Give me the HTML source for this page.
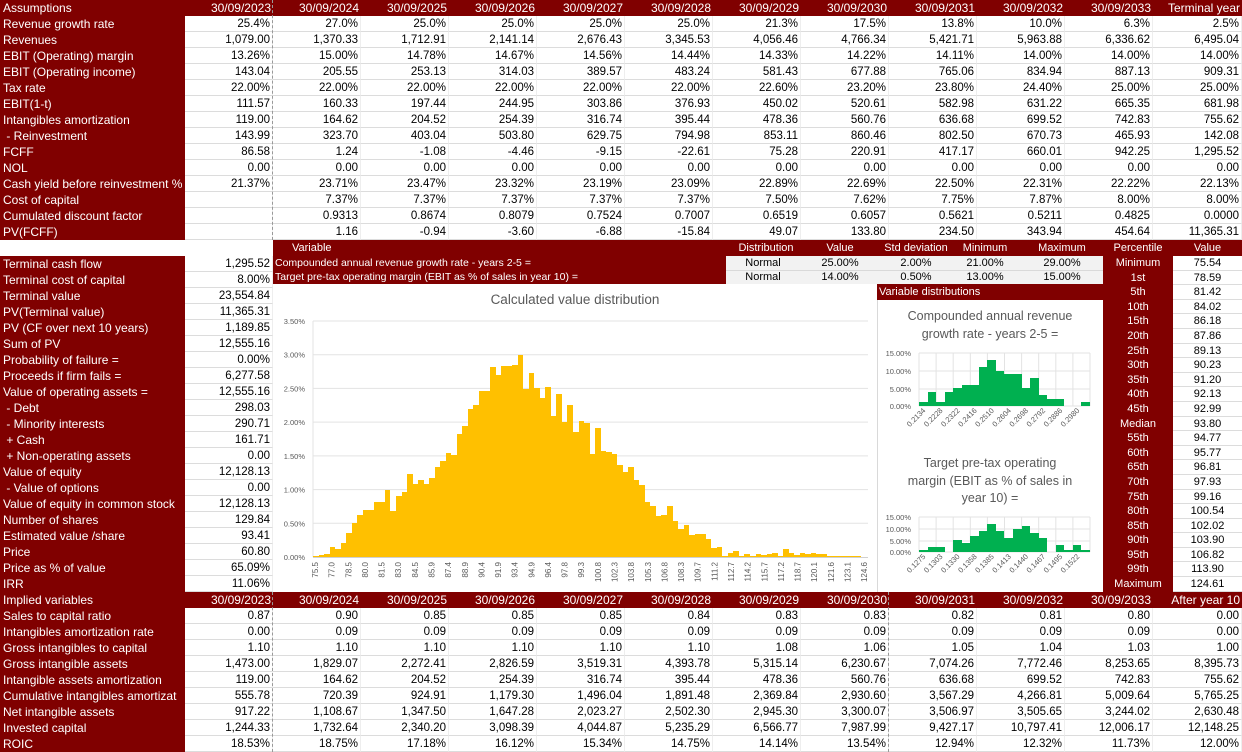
<!DOCTYPE html>
<html><head><meta charset="utf-8">
<style>
*{margin:0;padding:0}
body{width:1242px;height:751px;overflow:hidden;background:#fff;font-family:"Liberation Sans",Arial,sans-serif;position:relative;color:#000}
.blk{position:absolute;left:0}
.r{display:flex;height:16px}
.r>div{box-sizing:border-box;height:16px;line-height:16px;white-space:nowrap;overflow:hidden;text-align:right;padding-right:2px;font-size:11.5px;border-bottom:1px solid #dcdcdc;border-right:1px solid #eeeeee;width:88px;flex:none}
.r>div:last-child{width:89px}
.r>div.l{width:185px;background:#800000;color:#fff;text-align:left;padding-left:3px;font-size:12px;border:none}
.r.h>div{background:#800000;color:#fff;border:none;font-size:12px}
.mid .r>div:last-child{width:88px}
.dash{position:absolute;width:0;border-left:1px dashed #999}
.dk{position:absolute;background:#800000;color:#fff;font-size:11px}
.ab{position:absolute;white-space:nowrap}
.pc{position:absolute;left:1103px;top:256px;width:70px;background:#800000}
.pv{position:absolute;left:1173px;top:256px;width:69px}
.pc div,.pv div{height:14.6px;line-height:14.6px;font-size:11px;text-align:center;box-sizing:border-box}
.pc div{color:#fff}
.pv div{border-bottom:1px solid #dcdcdc}
.bars{position:absolute;display:flex;align-items:flex-end}
.bars i{display:block;flex:none}
.mb i{width:5.545px;background:#ffc000;height:calc(var(--v)*67.4px)}
.g1 i{width:8.55px;background:#00b050;height:calc(var(--v)*3.53px)}
.g2 i{width:8.55px;background:#00b050;height:calc(var(--v)*2.33px)}
</style></head><body>

<!-- TOP TABLE -->
<div class="blk" style="top:0">
<div class="r h"><div class="l">Assumptions</div><div>30/09/2023</div><div>30/09/2024</div><div>30/09/2025</div><div>30/09/2026</div><div>30/09/2027</div><div>30/09/2028</div><div>30/09/2029</div><div>30/09/2030</div><div>30/09/2031</div><div>30/09/2032</div><div>30/09/2033</div><div>Terminal year</div></div>
<div class="r"><div class="l">Revenue growth rate</div><div>25.4%</div><div>27.0%</div><div>25.0%</div><div>25.0%</div><div>25.0%</div><div>25.0%</div><div>21.3%</div><div>17.5%</div><div>13.8%</div><div>10.0%</div><div>6.3%</div><div>2.5%</div></div>
<div class="r"><div class="l">Revenues</div><div>1,079.00</div><div>1,370.33</div><div>1,712.91</div><div>2,141.14</div><div>2,676.43</div><div>3,345.53</div><div>4,056.46</div><div>4,766.34</div><div>5,421.71</div><div>5,963.88</div><div>6,336.62</div><div>6,495.04</div></div>
<div class="r"><div class="l">EBIT (Operating) margin</div><div>13.26%</div><div>15.00%</div><div>14.78%</div><div>14.67%</div><div>14.56%</div><div>14.44%</div><div>14.33%</div><div>14.22%</div><div>14.11%</div><div>14.00%</div><div>14.00%</div><div>14.00%</div></div>
<div class="r"><div class="l">EBIT (Operating income)</div><div>143.04</div><div>205.55</div><div>253.13</div><div>314.03</div><div>389.57</div><div>483.24</div><div>581.43</div><div>677.88</div><div>765.06</div><div>834.94</div><div>887.13</div><div>909.31</div></div>
<div class="r"><div class="l">Tax rate</div><div>22.00%</div><div>22.00%</div><div>22.00%</div><div>22.00%</div><div>22.00%</div><div>22.00%</div><div>22.60%</div><div>23.20%</div><div>23.80%</div><div>24.40%</div><div>25.00%</div><div>25.00%</div></div>
<div class="r"><div class="l">EBIT(1-t)</div><div>111.57</div><div>160.33</div><div>197.44</div><div>244.95</div><div>303.86</div><div>376.93</div><div>450.02</div><div>520.61</div><div>582.98</div><div>631.22</div><div>665.35</div><div>681.98</div></div>
<div class="r"><div class="l">Intangibles amortization</div><div>119.00</div><div>164.62</div><div>204.52</div><div>254.39</div><div>316.74</div><div>395.44</div><div>478.36</div><div>560.76</div><div>636.68</div><div>699.52</div><div>742.83</div><div>755.62</div></div>
<div class="r"><div class="l">&nbsp;- Reinvestment</div><div>143.99</div><div>323.70</div><div>403.04</div><div>503.80</div><div>629.75</div><div>794.98</div><div>853.11</div><div>860.46</div><div>802.50</div><div>670.73</div><div>465.93</div><div>142.08</div></div>
<div class="r"><div class="l">FCFF</div><div>86.58</div><div>1.24</div><div>-1.08</div><div>-4.46</div><div>-9.15</div><div>-22.61</div><div>75.28</div><div>220.91</div><div>417.17</div><div>660.01</div><div>942.25</div><div>1,295.52</div></div>
<div class="r"><div class="l">NOL</div><div>0.00</div><div>0.00</div><div>0.00</div><div>0.00</div><div>0.00</div><div>0.00</div><div>0.00</div><div>0.00</div><div>0.00</div><div>0.00</div><div>0.00</div><div>0.00</div></div>
<div class="r"><div class="l">Cash yield before reinvestment %</div><div>21.37%</div><div>23.71%</div><div>23.47%</div><div>23.32%</div><div>23.19%</div><div>23.09%</div><div>22.89%</div><div>22.69%</div><div>22.50%</div><div>22.31%</div><div>22.22%</div><div>22.13%</div></div>
<div class="r"><div class="l">Cost of capital</div><div></div><div>7.37%</div><div>7.37%</div><div>7.37%</div><div>7.37%</div><div>7.37%</div><div>7.50%</div><div>7.62%</div><div>7.75%</div><div>7.87%</div><div>8.00%</div><div>8.00%</div></div>
<div class="r"><div class="l">Cumulated discount factor</div><div></div><div>0.9313</div><div>0.8674</div><div>0.8079</div><div>0.7524</div><div>0.7007</div><div>0.6519</div><div>0.6057</div><div>0.5621</div><div>0.5211</div><div>0.4825</div><div>0.0000</div></div>
<div class="r"><div class="l">PV(FCFF)</div><div></div><div>1.16</div><div>-0.94</div><div>-3.60</div><div>-6.88</div><div>-15.84</div><div>49.07</div><div>133.80</div><div>234.50</div><div>343.94</div><div>454.64</div><div>11,365.31</div></div>
</div>
<div class="dash" style="left:272px;top:0;height:240px"></div>

<!-- MIDDLE HEADER ROW -->
<div class="dk" style="left:273px;top:240px;width:969px;height:16px;line-height:16px;font-size:11px">
<span class="ab" style="left:19px">Variable</span>
<span class="ab" style="left:453px;width:80px;text-align:center">Distribution</span>
<span class="ab" style="left:527px;width:80px;text-align:center">Value</span>
<span class="ab" style="left:598px;width:90px;text-align:center">Std deviation</span>
<span class="ab" style="left:672px;width:80px;text-align:center">Minimum</span>
<span class="ab" style="left:749px;width:80px;text-align:center">Maximum</span>
<span class="ab" style="left:830px;width:70px;text-align:center">Percentile</span>
<span class="ab" style="left:900px;width:69px;text-align:center">Value</span>
</div>

<!-- MIDDLE LEFT -->
<div class="blk mid" style="top:256px">
<div class="r"><div class="l">Terminal cash flow</div><div>1,295.52</div></div>
<div class="r"><div class="l">Terminal cost of capital</div><div>8.00%</div></div>
<div class="r"><div class="l">Terminal value</div><div>23,554.84</div></div>
<div class="r"><div class="l">PV(Terminal value)</div><div>11,365.31</div></div>
<div class="r"><div class="l">PV (CF over next 10 years)</div><div>1,189.85</div></div>
<div class="r"><div class="l">Sum of PV</div><div>12,555.16</div></div>
<div class="r"><div class="l">Probability of failure =</div><div>0.00%</div></div>
<div class="r"><div class="l">Proceeds if firm fails =</div><div>6,277.58</div></div>
<div class="r"><div class="l">Value of operating assets =</div><div>12,555.16</div></div>
<div class="r"><div class="l">&nbsp;- Debt</div><div>298.03</div></div>
<div class="r"><div class="l">&nbsp;- Minority interests</div><div>290.71</div></div>
<div class="r"><div class="l">&nbsp;+ Cash</div><div>161.71</div></div>
<div class="r"><div class="l">&nbsp;+ Non-operating assets</div><div>0.00</div></div>
<div class="r"><div class="l">Value of equity</div><div>12,128.13</div></div>
<div class="r"><div class="l">&nbsp;- Value of options</div><div>0.00</div></div>
<div class="r"><div class="l">Value of equity in common stock</div><div>12,128.13</div></div>
<div class="r"><div class="l">Number of shares</div><div>129.84</div></div>
<div class="r"><div class="l">Estimated value /share</div><div>93.41</div></div>
<div class="r"><div class="l">Price</div><div>60.80</div></div>
<div class="r"><div class="l">Price as % of value</div><div>65.09%</div></div>
<div class="r"><div class="l">IRR</div><div>11.06%</div></div>
</div>

<!-- Variable block -->
<div class="dk" style="left:273px;top:256px;width:453px;height:28px;font-size:10.5px">
<div style="position:absolute;left:2px;top:0;line-height:14px">Compounded annual revenue growth rate - years 2-5 =</div>
<div style="position:absolute;left:2px;top:14px;line-height:14px">Target pre-tax operating margin (EBIT as % of sales in year 10) =</div>
</div>
<div style="position:absolute;left:726px;top:256px;width:377px;height:28px;background:#f2f2f2;font-size:11px">
<div style="position:absolute;top:0;left:0;width:377px;height:14px;line-height:14px;border-bottom:1px solid #d9d9d9">
<span class="ab" style="left:0;width:74px;text-align:center">Normal</span><span class="ab" style="left:74px;width:80px;text-align:center">25.00%</span><span class="ab" style="left:145px;width:90px;text-align:center">2.00%</span><span class="ab" style="left:219px;width:80px;text-align:center">21.00%</span><span class="ab" style="left:296px;width:80px;text-align:center">29.00%</span></div>
<div style="position:absolute;top:14px;left:0;width:377px;height:14px;line-height:14px">
<span class="ab" style="left:0;width:74px;text-align:center">Normal</span><span class="ab" style="left:74px;width:80px;text-align:center">14.00%</span><span class="ab" style="left:145px;width:90px;text-align:center">0.50%</span><span class="ab" style="left:219px;width:80px;text-align:center">13.00%</span><span class="ab" style="left:296px;width:80px;text-align:center">15.00%</span></div>
</div>
<div class="dk" style="left:877px;top:284px;width:226px;height:16px;line-height:16px;font-size:11px;padding-left:2px;box-sizing:border-box">Variable distributions</div>
<div style="position:absolute;left:877px;top:300px;width:226px;height:292px;border-left:1px solid #d9d9d9;box-sizing:border-box"></div>

<!-- Percentiles -->
<div class="pc"><div>Minimum</div><div>1st</div><div>5th</div><div>10th</div><div>15th</div><div>20th</div><div>25th</div><div>30th</div><div>35th</div><div>40th</div><div>45th</div><div>Median</div><div>55th</div><div>60th</div><div>65th</div><div>70th</div><div>75th</div><div>80th</div><div>85th</div><div>90th</div><div>95th</div><div>99th</div><div>Maximum</div></div>
<div class="pv"><div>75.54</div><div>78.59</div><div>81.42</div><div>84.02</div><div>86.18</div><div>87.86</div><div>89.13</div><div>90.23</div><div>91.20</div><div>92.13</div><div>92.99</div><div>93.80</div><div>94.77</div><div>95.77</div><div>96.81</div><div>97.93</div><div>99.16</div><div>100.54</div><div>102.02</div><div>103.90</div><div>106.82</div><div>113.90</div><div>124.61</div></div>

<!-- Charts SVG: grid, labels -->
<svg width="1242" height="751" style="position:absolute;left:0;top:0" font-family="Liberation Sans, Arial, sans-serif">
<g stroke="#e3e3e3" stroke-width="1">
<line x1="313" x2="868" y1="321" y2="321"/><line x1="313" x2="868" y1="354.7" y2="354.7"/><line x1="313" x2="868" y1="388.4" y2="388.4"/><line x1="313" x2="868" y1="422.1" y2="422.1"/><line x1="313" x2="868" y1="455.9" y2="455.9"/><line x1="313" x2="868" y1="489.6" y2="489.6"/><line x1="313" x2="868" y1="523.3" y2="523.3"/>
<line x1="313" x2="313" y1="321" y2="557"/>
</g>
<line x1="313" x2="868" y1="557.5" y2="557.5" stroke="#d0d0d0"/>
<text x="575" y="304" font-size="13.5" fill="#595959" text-anchor="middle">Calculated value distribution</text>
<g font-size="7.5" fill="#595959" text-anchor="end">
<text x="305" y="324">3.50%</text><text x="305" y="357.7">3.00%</text><text x="305" y="391.4">2.50%</text><text x="305" y="425.1">2.00%</text><text x="305" y="458.9">1.50%</text><text x="305" y="492.6">1.00%</text><text x="305" y="526.3">0.50%</text><text x="305" y="560">0.00%</text>
</g>
<g font-size="8" fill="#595959" text-anchor="end">
<text transform="translate(318,562) rotate(-90)">75.5</text><text transform="translate(334.6,562) rotate(-90)">77.0</text><text transform="translate(351.3,562) rotate(-90)">78.5</text><text transform="translate(367.9,562) rotate(-90)">80.0</text><text transform="translate(384.6,562) rotate(-90)">81.5</text><text transform="translate(401.2,562) rotate(-90)">83.0</text><text transform="translate(417.8,562) rotate(-90)">84.5</text><text transform="translate(434.5,562) rotate(-90)">85.9</text><text transform="translate(451.1,562) rotate(-90)">87.4</text><text transform="translate(467.8,562) rotate(-90)">88.9</text><text transform="translate(484.4,562) rotate(-90)">90.4</text><text transform="translate(501,562) rotate(-90)">91.9</text><text transform="translate(517.7,562) rotate(-90)">93.4</text><text transform="translate(534.3,562) rotate(-90)">94.9</text><text transform="translate(551,562) rotate(-90)">96.4</text><text transform="translate(567.6,562) rotate(-90)">97.8</text><text transform="translate(584.2,562) rotate(-90)">99.3</text><text transform="translate(600.9,562) rotate(-90)">100.8</text><text transform="translate(617.5,562) rotate(-90)">102.3</text><text transform="translate(634.2,562) rotate(-90)">103.8</text><text transform="translate(650.8,562) rotate(-90)">105.3</text><text transform="translate(667.4,562) rotate(-90)">106.8</text><text transform="translate(684.1,562) rotate(-90)">108.3</text><text transform="translate(700.7,562) rotate(-90)">109.7</text><text transform="translate(717.4,562) rotate(-90)">111.2</text><text transform="translate(734,562) rotate(-90)">112.7</text><text transform="translate(750.6,562) rotate(-90)">114.2</text><text transform="translate(767.3,562) rotate(-90)">115.7</text><text transform="translate(783.9,562) rotate(-90)">117.2</text><text transform="translate(800.6,562) rotate(-90)">118.7</text><text transform="translate(817.2,562) rotate(-90)">120.1</text><text transform="translate(833.8,562) rotate(-90)">121.6</text><text transform="translate(850.5,562) rotate(-90)">123.1</text><text transform="translate(867.1,562) rotate(-90)">124.6</text>
</g>

<!-- small chart 1 -->
<g fill="#595959" font-size="12.5" text-anchor="middle">
<text x="990" y="320">Compounded annual revenue</text><text x="990" y="338">growth rate - years 2-5 =</text>
<text x="990" y="467">Target pre-tax operating</text><text x="990" y="485">margin (EBIT as % of sales in</text><text x="990" y="502">year 10) =</text>
</g>
<g stroke="#e3e3e3">
<line x1="919" x2="1090" y1="353" y2="353"/><line x1="919" x2="1090" y1="371" y2="371"/><line x1="919" x2="1090" y1="389" y2="389"/><line x1="919" x2="1090" y1="406" y2="406"/>
<line x1="919" x2="919" y1="353" y2="406"/><line x1="936.1" x2="936.1" y1="353" y2="406"/><line x1="953.2" x2="953.2" y1="353" y2="406"/><line x1="970.3" x2="970.3" y1="353" y2="406"/><line x1="987.4" x2="987.4" y1="353" y2="406"/><line x1="1004.5" x2="1004.5" y1="353" y2="406"/><line x1="1021.6" x2="1021.6" y1="353" y2="406"/><line x1="1038.7" x2="1038.7" y1="353" y2="406"/><line x1="1055.8" x2="1055.8" y1="353" y2="406"/><line x1="1072.9" x2="1072.9" y1="353" y2="406"/><line x1="1090" x2="1090" y1="353" y2="406"/>
<line x1="919" x2="1090" y1="517" y2="517"/><line x1="919" x2="1090" y1="529" y2="529"/><line x1="919" x2="1090" y1="541" y2="541"/><line x1="919" x2="1090" y1="552" y2="552"/>
<line x1="919" x2="919" y1="517" y2="552"/><line x1="936.1" x2="936.1" y1="517" y2="552"/><line x1="953.2" x2="953.2" y1="517" y2="552"/><line x1="970.3" x2="970.3" y1="517" y2="552"/><line x1="987.4" x2="987.4" y1="517" y2="552"/><line x1="1004.5" x2="1004.5" y1="517" y2="552"/><line x1="1021.6" x2="1021.6" y1="517" y2="552"/><line x1="1038.7" x2="1038.7" y1="517" y2="552"/><line x1="1055.8" x2="1055.8" y1="517" y2="552"/><line x1="1072.9" x2="1072.9" y1="517" y2="552"/><line x1="1090" x2="1090" y1="517" y2="552"/>
</g>
<g font-size="7.5" fill="#595959" text-anchor="end">
<text x="911" y="356">15.00%</text><text x="911" y="374">10.00%</text><text x="911" y="392">5.00%</text><text x="911" y="409">0.00%</text>
<text x="911" y="520">15.00%</text><text x="911" y="532">10.00%</text><text x="911" y="544">5.00%</text><text x="911" y="555">0.00%</text>
</g>
<g font-size="7.5" fill="#595959" text-anchor="end">
<text transform="translate(926,411) rotate(-45)">0.2134</text><text transform="translate(943.1,411) rotate(-45)">0.2228</text><text transform="translate(960.2,411) rotate(-45)">0.2322</text><text transform="translate(977.3,411) rotate(-45)">0.2416</text><text transform="translate(994.4,411) rotate(-45)">0.2510</text><text transform="translate(1011.5,411) rotate(-45)">0.2604</text><text transform="translate(1028.6,411) rotate(-45)">0.2698</text><text transform="translate(1045.7,411) rotate(-45)">0.2792</text><text transform="translate(1062.8,411) rotate(-45)">0.2886</text><text transform="translate(1079.9,411) rotate(-45)">0.2980</text>
<text transform="translate(926,557) rotate(-45)">0.1275</text><text transform="translate(943.1,557) rotate(-45)">0.1303</text><text transform="translate(960.2,557) rotate(-45)">0.1330</text><text transform="translate(977.3,557) rotate(-45)">0.1358</text><text transform="translate(994.4,557) rotate(-45)">0.1385</text><text transform="translate(1011.5,557) rotate(-45)">0.1413</text><text transform="translate(1028.6,557) rotate(-45)">0.1440</text><text transform="translate(1045.7,557) rotate(-45)">0.1467</text><text transform="translate(1062.8,557) rotate(-45)">0.1495</text><text transform="translate(1079.9,557) rotate(-45)">0.1522</text>
</g>
</svg>

<!-- Main bars -->
<div class="bars mb" style="left:313px;top:321px;height:236px;width:555px">
<i style="--v:.01"></i><i style="--v:.03"></i><i style="--v:.04"></i><i style="--v:.15"></i><i style="--v:.12"></i><i style="--v:.21"></i><i style="--v:.35"></i><i style="--v:.51"></i><i style="--v:.62"></i><i style="--v:.70"></i><i style="--v:.70"></i><i style="--v:.82"></i><i style="--v:.82"></i><i style="--v:1.00"></i><i style="--v:.69"></i><i style="--v:.90"></i><i style="--v:.96"></i><i style="--v:1.23"></i><i style="--v:1.09"></i><i style="--v:1.15"></i><i style="--v:1.08"></i><i style="--v:1.17"></i><i style="--v:1.34"></i><i style="--v:1.43"></i><i style="--v:1.55"></i><i style="--v:1.51"></i><i style="--v:1.82"></i><i style="--v:1.95"></i><i style="--v:2.20"></i><i style="--v:2.26"></i><i style="--v:2.47"></i><i style="--v:2.46"></i><i style="--v:2.82"></i><i style="--v:2.70"></i><i style="--v:2.83"></i><i style="--v:2.84"></i><i style="--v:2.85"></i><i style="--v:3.00"></i><i style="--v:2.50"></i><i style="--v:2.73"></i><i style="--v:2.51"></i><i style="--v:2.36"></i><i style="--v:2.52"></i><i style="--v:2.09"></i><i style="--v:2.42"></i><i style="--v:2.00"></i><i style="--v:2.25"></i><i style="--v:1.86"></i>
<i style="--v:2.02"></i><i style="--v:1.99"></i><i style="--v:1.53"></i><i style="--v:1.91"></i><i style="--v:1.57"></i><i style="--v:1.56"></i><i style="--v:1.53"></i><i style="--v:1.36"></i><i style="--v:1.26"></i><i style="--v:1.34"></i><i style="--v:1.15"></i><i style="--v:1.07"></i><i style="--v:.82"></i><i style="--v:.75"></i><i style="--v:.61"></i><i style="--v:.62"></i><i style="--v:.75"></i><i style="--v:.53"></i><i style="--v:.42"></i><i style="--v:.47"></i><i style="--v:.33"></i><i style="--v:.34"></i><i style="--v:.34"></i><i style="--v:.27"></i><i style="--v:.14"></i><i style="--v:.15"></i><i style="--v:.02"></i><i style="--v:.06"></i><i style="--v:.09"></i><i style="--v:.02"></i><i style="--v:.05"></i><i style="--v:.02"></i><i style="--v:.04"></i><i style="--v:.03"></i><i style="--v:.04"></i><i style="--v:.06"></i><i style="--v:.01"></i><i style="--v:.12"></i><i style="--v:.06"></i><i style="--v:.03"></i><i style="--v:.06"></i><i style="--v:.05"></i><i style="--v:.06"></i><i style="--v:.04"></i><i style="--v:.04"></i><i style="--v:.01"></i><i style="--v:.01"></i><i style="--v:.01"></i><i style="--v:.01"></i><i style="--v:.02"></i><i style="--v:.01"></i>
</div>

<div class="bars g1" style="left:919px;top:353px;height:53px;width:171px">
<i style="--v:1"></i><i style="--v:4"></i><i style="--v:1"></i><i style="--v:4"></i><i style="--v:5"></i><i style="--v:6"></i><i style="--v:6"></i><i style="--v:11"></i><i style="--v:13"></i><i style="--v:10"></i><i style="--v:9"></i><i style="--v:9"></i><i style="--v:5"></i><i style="--v:8"></i><i style="--v:3"></i><i style="--v:2"></i><i style="--v:2"></i><i style="--v:0"></i><i style="--v:0"></i><i style="--v:1"></i>
</div>
<div class="bars g2" style="left:919px;top:517px;height:35px;width:171px">
<i style="--v:1"></i><i style="--v:2"></i><i style="--v:2"></i><i style="--v:0"></i><i style="--v:5"></i><i style="--v:4"></i><i style="--v:7"></i><i style="--v:9"></i><i style="--v:12"></i><i style="--v:9"></i><i style="--v:6"></i><i style="--v:10"></i><i style="--v:11"></i><i style="--v:8"></i><i style="--v:6"></i><i style="--v:0"></i><i style="--v:3"></i><i style="--v:1"></i><i style="--v:3"></i><i style="--v:1"></i>
</div>

<!-- BOTTOM TABLE -->
<div class="blk" style="top:592px">
<div class="r h"><div class="l">Implied variables</div><div>30/09/2023</div><div>30/09/2024</div><div>30/09/2025</div><div>30/09/2026</div><div>30/09/2027</div><div>30/09/2028</div><div>30/09/2029</div><div>30/09/2030</div><div>30/09/2031</div><div>30/09/2032</div><div>30/09/2033</div><div>After year 10</div></div>
<div class="r"><div class="l">Sales to capital ratio</div><div>0.87</div><div>0.90</div><div>0.85</div><div>0.85</div><div>0.85</div><div>0.84</div><div>0.83</div><div>0.83</div><div>0.82</div><div>0.81</div><div>0.80</div><div>0.00</div></div>
<div class="r"><div class="l">Intangibles amortization rate</div><div>0.00</div><div>0.09</div><div>0.09</div><div>0.09</div><div>0.09</div><div>0.09</div><div>0.09</div><div>0.09</div><div>0.09</div><div>0.09</div><div>0.09</div><div>0.00</div></div>
<div class="r"><div class="l">Gross intangibles to capital</div><div>1.10</div><div>1.10</div><div>1.10</div><div>1.10</div><div>1.10</div><div>1.10</div><div>1.08</div><div>1.06</div><div>1.05</div><div>1.04</div><div>1.03</div><div>1.00</div></div>
<div class="r"><div class="l">Gross intangible assets</div><div>1,473.00</div><div>1,829.07</div><div>2,272.41</div><div>2,826.59</div><div>3,519.31</div><div>4,393.78</div><div>5,315.14</div><div>6,230.67</div><div>7,074.26</div><div>7,772.46</div><div>8,253.65</div><div>8,395.73</div></div>
<div class="r"><div class="l">Intangible assets amortization</div><div>119.00</div><div>164.62</div><div>204.52</div><div>254.39</div><div>316.74</div><div>395.44</div><div>478.36</div><div>560.76</div><div>636.68</div><div>699.52</div><div>742.83</div><div>755.62</div></div>
<div class="r"><div class="l">Cumulative intangibles amortizat</div><div>555.78</div><div>720.39</div><div>924.91</div><div>1,179.30</div><div>1,496.04</div><div>1,891.48</div><div>2,369.84</div><div>2,930.60</div><div>3,567.29</div><div>4,266.81</div><div>5,009.64</div><div>5,765.25</div></div>
<div class="r"><div class="l">Net intangible assets</div><div>917.22</div><div>1,108.67</div><div>1,347.50</div><div>1,647.28</div><div>2,023.27</div><div>2,502.30</div><div>2,945.30</div><div>3,300.07</div><div>3,506.97</div><div>3,505.65</div><div>3,244.02</div><div>2,630.48</div></div>
<div class="r"><div class="l">Invested capital</div><div>1,244.33</div><div>1,732.64</div><div>2,340.20</div><div>3,098.39</div><div>4,044.87</div><div>5,235.29</div><div>6,566.77</div><div>7,987.99</div><div>9,427.17</div><div>10,797.41</div><div>12,006.17</div><div>12,148.25</div></div>
<div class="r"><div class="l">ROIC</div><div>18.53%</div><div>18.75%</div><div>17.18%</div><div>16.12%</div><div>15.34%</div><div>14.75%</div><div>14.14%</div><div>13.54%</div><div>12.94%</div><div>12.32%</div><div>11.73%</div><div>12.00%</div></div>
</div>
<div class="dash" style="left:272px;top:592px;height:160px"></div>
<div class="dash" style="left:888px;top:592px;height:160px"></div>
</body></html>
